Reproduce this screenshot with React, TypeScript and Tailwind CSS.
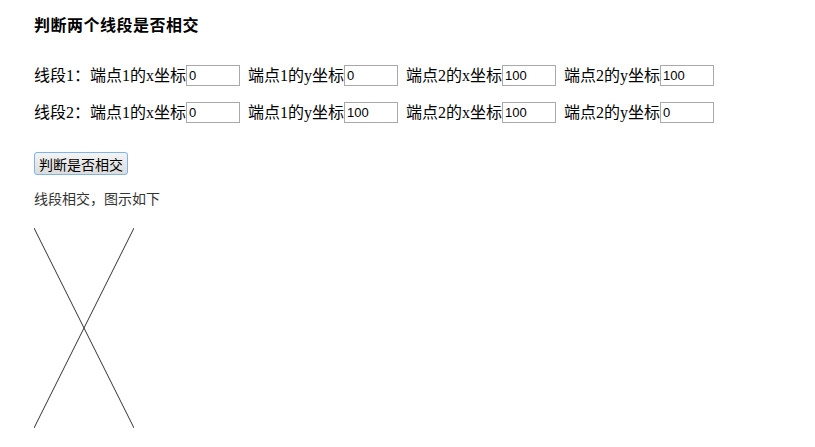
import React from 'react';

const serif = { fontFamily: '"Liberation Serif", "Noto Sans CJK SC", serif' };

function Field({ label, value, first }: { label: string; value: string; first?: boolean }) {
  return (
    <>
      <span className={first ? '' : 'ml-[8px]'}>{label}</span>
      <input
        readOnly
        value={value}
        className="w-[54px] h-[21px] border border-[#a9a9a9] bg-white px-[2px] text-[13px] leading-none text-black outline-none font-['Liberation_Sans',sans-serif]"
      />
    </>
  );
}

function Row({ name, vals }: { name: string; vals: string[] }) {
  return (
    <div className="flex items-center h-[21px] text-[16px] text-black whitespace-nowrap" style={serif}>
      <Field first label={`${name}：端点1的x坐标`} value={vals[0]} />
      <Field label="端点1的y坐标" value={vals[1]} />
      <Field label="端点2的x坐标" value={vals[2]} />
      <Field label="端点2的y坐标" value={vals[3]} />
    </div>
  );
}

export default function App() {
  return (
    <div className="w-[815px] h-[447px] bg-white pl-[34px] pt-[16px] overflow-hidden">
      <h4 className="text-[16px] font-bold text-black leading-[20px] tracking-[0.5px]" style={serif}>
        判断两个线段是否相交
      </h4>
      <div className="mt-[29px] flex flex-col gap-[16px]">
        <Row name="线段1" vals={['0', '0', '100', '100']} />
        <Row name="线段2" vals={['0', '100', '100', '0']} />
      </div>
      <button className="mt-[29px] w-[94px] h-[23px] rounded-[3px] border border-[#7eb4ea] bg-gradient-to-b from-[#f4f4f4] to-[#dcdcdc] text-[14px] text-black leading-none font-['Noto_Sans_CJK_SC',sans-serif]">
        判断是否相交
      </button>
      <p className="mt-[13px] text-[14px] leading-[18px] text-[#333] font-['Noto_Sans_CJK_SC',sans-serif]">
        线段相交，图示如下
      </p>
      <svg width="100" height="200" viewBox="0 0 100 200" className="mt-[21px] block">
        <line x1="0" y1="0" x2="100" y2="200" stroke="#333" strokeWidth="1" />
        <line x1="100" y1="0" x2="0" y2="200" stroke="#333" strokeWidth="1" />
      </svg>
    </div>
  );
}
